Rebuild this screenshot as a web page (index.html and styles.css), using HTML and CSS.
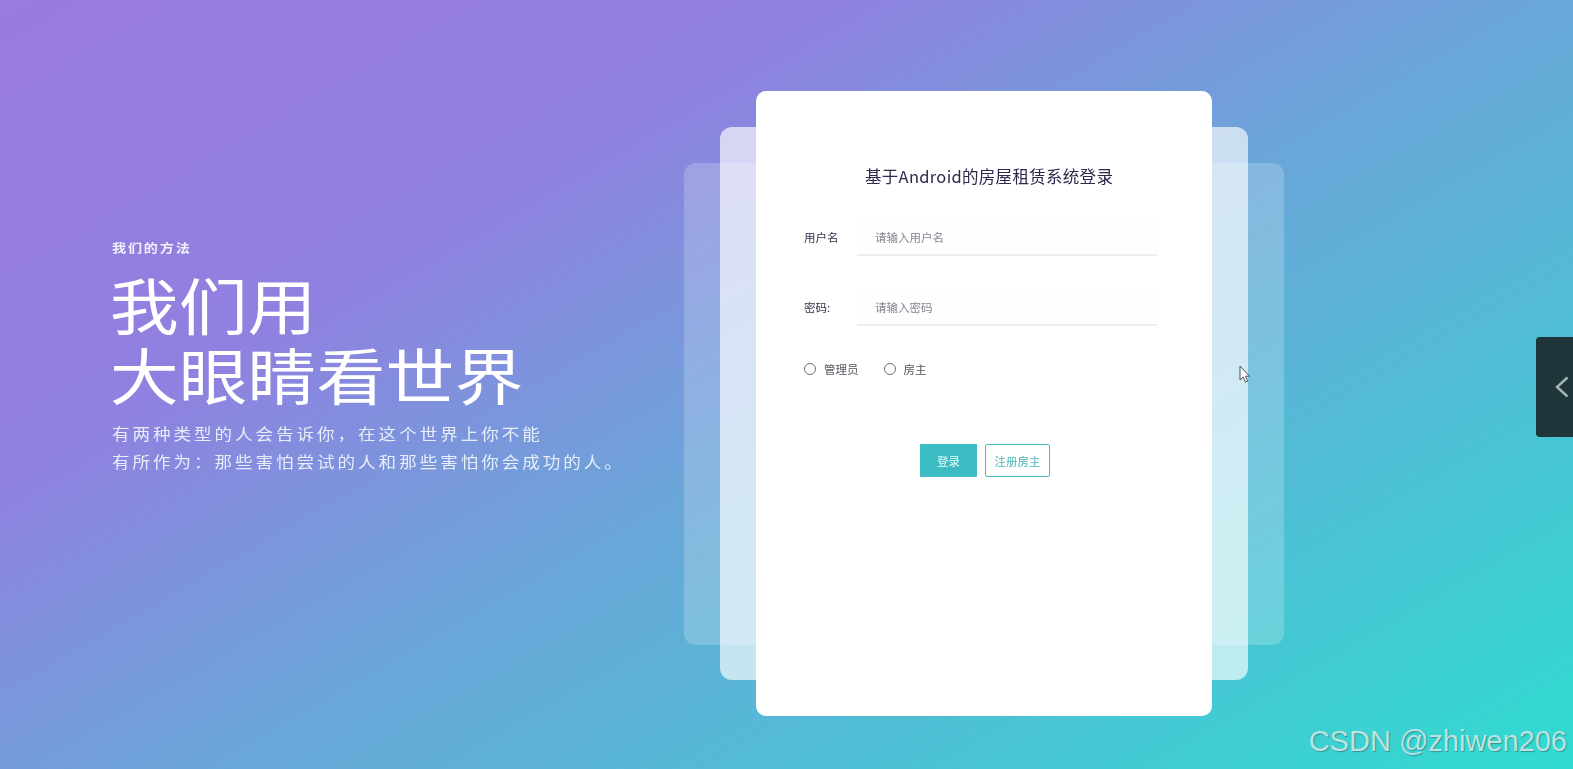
FILE: index.html
```html
<!DOCTYPE html>
<html lang="zh-CN">
<head>
<meta charset="utf-8">
<title>登录</title>
<link rel="stylesheet" href="styles.css">
</head>
<body>
<main class="page">
  <section class="intro">
    <div class="intro-copy">
      <p class="eyebrow">我们的方法</p>
      <h1 class="headline">我们用<br>大眼睛看世界</h1>
      <p class="lede">有两种类型的人会告诉你，在这个世界上你不能<br>有所作为：那些害怕尝试的人和那些害怕你会成功的人。</p>
    </div>
  </section>
  <section class="stage">
    <div class="sheet sheet-back"></div>
    <div class="sheet sheet-mid"></div>
    <form class="card">
      <h2 class="card-title">基于Android的房屋租赁系统登录</h2>
      <label class="field">
        <span class="field-label">用户名</span>
        <input class="field-input" type="text" placeholder="请输入用户名">
      </label>
      <label class="field">
        <span class="field-label">密码:</span>
        <input class="field-input" type="password" placeholder="请输入密码">
      </label>
      <div class="roles">
        <label class="role"><input class="role-radio" type="radio" name="role"><span>管理员</span></label>
        <label class="role"><input class="role-radio" type="radio" name="role"><span>房主</span></label>
      </div>
      <div class="actions">
        <button class="btn btn-solid" type="button">登录</button>
        <button class="btn btn-ghost" type="button">注册房主</button>
      </div>
    </form>
  </section>
</main>
<svg class="cursor" width="12" height="19" viewBox="0 0 12 19" aria-hidden="true"><path d="M1 1v14l3.2-3 2.3 5.2 2.3-1-2.3-5H10.500z" fill="#fff" stroke="#4a5058" stroke-width="1"/></svg>
<aside class="drawer-tab">
  <svg width="16" height="24" viewBox="0 0 16 24" aria-hidden="true"><path d="M13.500 2.500 3 12l10.500 9.500" fill="none" stroke="#a9b4b6" stroke-width="2.400"/></svg>
</aside>
<div class="watermark">CSDN @zhiwen206</div>
</body>
</html>
```
FILE: styles.css
```css
* { box-sizing: border-box; }
html, body { margin: 0; height: 100%; }
body {
  overflow: hidden;
  font-family: "Noto Sans CJK SC", "Noto Sans", sans-serif;
  background: linear-gradient(150deg, #997ade 0%, #9180e0 28%, #6aa6d9 53%, #2fdcd0 100%);
}
.page { display: flex; height: 100%; }
.intro { flex: 0 0 684px; padding: 240px 0 0 112px; color: #fff; filter: blur(.4px); }
.intro-copy { transform: scaleX(1.13); transform-origin: 0 0; }
.eyebrow { margin: 0; font-size: 12.500px; line-height: 16px; letter-spacing: 1.600px; font-weight: 700; color: #eef0fb; }
.headline { margin: 13px 0 0 -2px; font-size: 61px; line-height: 70px; font-weight: 400; }
.lede { margin: 10px 0 0; font-size: 15.500px; line-height: 28px; letter-spacing: 2.650px; color: #e6eefa; white-space: nowrap; }
.stage { position: relative; flex: 0 0 600px; height: 100%; }
.sheet { position: absolute; border-radius: 12px; }
.sheet-back { left: 0; top: 163px; width: 600px; height: 482px; background: rgba(255,255,255,.2); }
.sheet-mid { left: 36px; top: 127px; width: 528px; height: 553px; background: rgba(255,255,255,.65); }
.card { position: absolute; left: 72px; top: 91px; width: 456px; height: 625px; padding: 72px 48px 0; border-radius: 10px; background: #fff; filter: blur(.3px); }
.card-title { margin: 0 0 0 61px; font-size: 16.500px; line-height: 26px; letter-spacing: .3px; font-weight: 400; color: #2b2a4c; white-space: nowrap; }
.field { display: flex; align-items: center; height: 36px; margin-top: 34px; }
.card-title + .field { margin-top: 31px; }
.field-label { flex: 0 0 53px; margin-top: -2px; font-size: 11.500px; color: #33324f; }
.field-input { width: 300px; height: 36px; padding: 0 0 0 18px; border: 0; border-bottom: 2px solid #eceef0; background: #fefeff; font: inherit; font-size: 11.500px; outline: none; }
.field-input::placeholder { color: #85858f; }
.roles { display: flex; gap: 25px; margin-top: 35px; }
.role { display: flex; align-items: center; gap: 8px; font-size: 11.500px; color: #55555f; }
.role-radio { appearance: none; width: 12px; height: 12px; margin: 0; border: 1px solid #6d7075; border-radius: 50%; background: #fff; }
.actions { display: flex; justify-content: center; gap: 8px; margin-top: 67px; padding-left: 2px; }
.btn { height: 33px; border-radius: 1px; font: inherit; font-size: 11.500px; padding: 0; }
.btn-solid { width: 57px; border: 0; background: #3dbcc4; color: #eafafa; }
.btn-ghost { width: 65px; border: 1px solid #4db9bf; border-radius: 2px; background: #fff; color: #4db3ba; }
.cursor { position: absolute; left: 1239px; top: 365px; }
.drawer-tab { position: absolute; right: 0; top: 337px; display: flex; align-items: center; justify-content: flex-end; width: 37px; height: 100px; padding-right: 3px; border-radius: 4px 0 0 4px; background: #1e3539; }
.watermark { position: absolute; right: 6px; top: 724px; font-family: "Liberation Sans", Arial, sans-serif; font-size: 29px; line-height: 34px; color: #bce3e1; text-shadow: 1px 1px 1px rgba(40,110,110,.6); white-space: nowrap; }
```
